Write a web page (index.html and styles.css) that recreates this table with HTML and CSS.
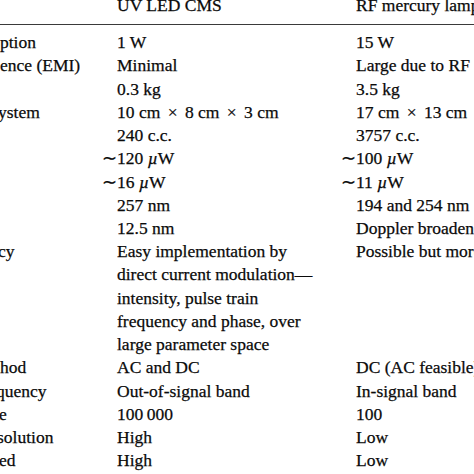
FILE: index.html
```html
<!DOCTYPE html>
<html>
<head>
<meta charset="utf-8">
<link rel="stylesheet" href="styles.css">
</head>
<body>
<div class="sheet">
  <div class="table">
    <div class="head">
      <div class="c1"></div>
      <div class="c2">UV LED CMS</div>
      <div class="c3">RF mercury lamp</div>
    </div>
    <div class="body">
      <div class="c1">ption</div><div class="c2">1 W</div><div class="c3">15 W</div>
      <div class="c1">ence (EMI)</div><div class="c2">Minimal</div><div class="c3">Large due to RF interference</div>
      <div class="c1"></div><div class="c2">0.3 kg</div><div class="c3">3.5 kg</div>
      <div class="c1"><span class="sh2">ystem</span></div><div class="c2">10 cm <span class="x">×</span> 8 cm <span class="x">×</span> 3 cm</div><div class="c3">17 cm <span class="x">×</span> 13 cm <span class="x">×</span> 17 cm</div>
      <div class="c1"></div><div class="c2">240 c.c.</div><div class="c3">3757 c.c.</div>
      <div class="c1"></div><div class="c2"><span class="tl">∼</span>120 <i>µ</i>W</div><div class="c3"><span class="tl">∼</span>100 <i>µ</i>W</div>
      <div class="c1"></div><div class="c2"><span class="tl">∼</span>16 <i>µ</i>W</div><div class="c3"><span class="tl">∼</span>11 <i>µ</i>W</div>
      <div class="c1"></div><div class="c2">257 nm</div><div class="c3">194 and 254 nm</div>
      <div class="c1"></div><div class="c2">12.5 nm</div><div class="c3">Doppler broadened</div>
      <div class="c1"><span class="sh2">cy</span></div><div class="c2">Easy implementation by<br>direct current modulation—<br>intensity, pulse train<br>frequency and phase, over<br>large parameter space</div><div class="c3">Possible but more complex</div>
      <div class="c1">hod</div><div class="c2">AC and DC</div><div class="c3">DC (AC feasible)</div>
      <div class="c1"><span class="sh4">quency</span></div><div class="c2">Out-of-signal band</div><div class="c3">In-signal band</div>
      <div class="c1"><span class="sh1">e</span></div><div class="c2">100&#8201;000</div><div class="c3">100</div>
      <div class="c1"><span class="sh3">solution</span></div><div class="c2">High</div><div class="c3">Low</div>
      <div class="c1"><span class="sh1">ed</span></div><div class="c2">High</div><div class="c3">Low</div>
    </div>
  </div>
</div>
</body>
</html>
```
FILE: styles.css
```css
html, body {
  margin: 0;
  padding: 0;
  background: #ffffff;
}
body {
  width: 474px;
  height: 474px;
  overflow: hidden;
}
.sheet {
  width: 474px;
  height: 474px;
  overflow: hidden;
  font-family: "Liberation Serif", "Times New Roman", serif;
  font-size: 17.5px;
  line-height: 23.22px;
  color: #0a0a0a;
  -webkit-text-stroke: 0.25px #0a0a0a;
}
.table {
  margin-top: -6px;
  width: 700px;
}
.head, .body {
  display: grid;
  grid-template-columns: 117px 239px 344px;
}
.head {
  padding-bottom: 7px;
  border-bottom: 1px solid #3a3a3a;
}
.body {
  padding-top: 6px;
}
.c1, .c2, .c3 {
  white-space: nowrap;
}
.c1 {
  overflow: hidden;
}
.x {
  padding: 0 3px;
}
.tl {
  display: inline-block;
  margin-left: -15px;
  width: 15px;
}
.sh1 { margin-left: -1px; }
.sh2 { margin-left: -2px; }
.sh3 { margin-left: -3px; }
.sh4 { margin-left: -4px; }
.c1 span { display: inline-block; }
```
